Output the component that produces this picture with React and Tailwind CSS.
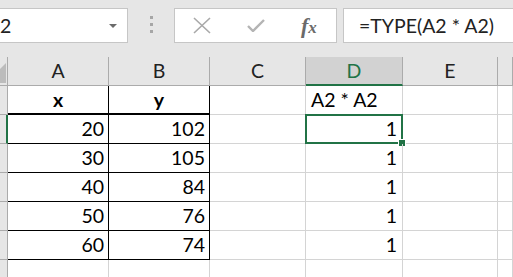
import React from "react";

const cols = ["A", "B", "C", "D", "E", ""];
const rows = [
  ["20", "102", "1"],
  ["30", "105", "1"],
  ["40", "84", "1"],
  ["50", "76", "1"],
  ["60", "74", "1"],
];

function Toolbar() {
  return (
    <div className="flex h-[57px] items-start bg-[#e6e6e6] pt-[8px]">
      <div className="-ml-px flex h-[35px] w-[129px] shrink-0 items-center border border-[#c6c6c6] bg-white">
        <span className="text-[19.5px] leading-none text-[#222]">2</span>
        <svg className="ml-auto mr-[10px]" width="8" height="4" viewBox="0 0 8 4">
          <path d="M0 0h8L4 4z" fill="#6b6b6b" />
        </svg>
      </div>
      <div className="flex w-[46px] shrink-0 flex-col items-center gap-[4px] pt-[8px]">
        <span className="h-[3px] w-[3px] bg-[#a6a6a6]" />
        <span className="h-[3px] w-[3px] bg-[#a6a6a6]" />
        <span className="h-[3px] w-[3px] bg-[#a6a6a6]" />
      </div>
      <div className="flex h-[35px] w-[163px] shrink-0 items-center border border-[#c6c6c6] bg-white">
        <svg className="ml-[18px]" width="18" height="17" viewBox="0 0 18 17">
          <path d="M1 1L17 16M17 1L1 16" stroke="#a9a9a9" strokeWidth="1.6" />
        </svg>
        <svg className="ml-[36px]" width="18" height="13" viewBox="0 0 18 13">
          <path d="M1 7L6 12L17 1" stroke="#b4b4b4" strokeWidth="2.4" fill="none" />
        </svg>
        <span className="ml-[36px] font-['Liberation_Serif',serif] text-[22px] font-bold italic leading-none text-[#6a6a6a]">
          f<span className="text-[17px]">x</span>
        </span>
      </div>
      <div className="ml-[6px] flex h-[35px] flex-1 items-center border border-r-0 border-[#c6c6c6] bg-white pl-[15px]">
        <span className="text-[19.5px] leading-none text-[#222]">=TYPE(A2 * A2)</span>
      </div>
    </div>
  );
}

function Cell({ children, className = "" }) {
  return (
    <div className={"flex h-[29px] items-center border-b border-r text-[19.5px] leading-none text-black " + className}>
      {children}
    </div>
  );
}

export default function App() {
  return (
    <div className="h-[277px] w-[513px] overflow-hidden bg-white font-['Lato',sans-serif]">
      <Toolbar />
      <div className="grid grid-cols-[8px_101px_101px_96px_97px_95px_1fr]">
        <div className="relative h-[29px] border-b border-r border-[#ababab] bg-[#e6e6e6]">
          <svg className="absolute right-[1px] top-[6px]" width="20" height="20" viewBox="0 0 20 20">
            <path d="M20 0V20H0z" fill="#bcbcbc" />
          </svg>
        </div>
        {cols.map((c) =>
          c === "D" ? (
            <div key={c} className="flex h-[29px] items-center justify-center border-b-2 border-r border-b-[#217346] border-r-[#ababab] bg-[#d2d2d2] text-[19.5px] text-[#217346]">
              {c}
            </div>
          ) : (
            <div key={c || "f"} className="flex h-[29px] items-center justify-center border-b border-r border-[#ababab] bg-[#e6e6e6] text-[19.5px] text-[#222]">
              {c}
            </div>
          )
        )}

        <div className="h-[29px] border-b border-r border-[#ababab] bg-[#e6e6e6]" />
        <Cell className="justify-center border-r-black border-b-2 border-b-black font-bold">x</Cell>
        <Cell className="justify-center border-r-black border-b-2 border-b-black font-bold">y</Cell>
        <Cell className="border-[#d4d4d4]" />
        <Cell className="border-[#d4d4d4] pl-[5px]">A2 * A2</Cell>
        <Cell className="border-[#d4d4d4]" />
        <Cell className="border-[#d4d4d4]" />

        {rows.map((r, i) => (
          <React.Fragment key={i}>
            <div
              className={
                "h-[29px] border-b bg-[#e6e6e6] " +
                (i === 0 ? "border-r-2 border-b-[#ababab] border-r-[#217346]" : "border-r border-[#ababab]")
              }
            />
            <Cell className="justify-end border-black pr-[4px]">{r[0]}</Cell>
            <Cell className="justify-end border-black pr-[4px]">{r[1]}</Cell>
            <Cell className="border-[#d4d4d4]" />
            <Cell className="relative justify-end border-[#d4d4d4] pr-[5px]">
              {r[2]}
              {i === 0 ? (
                <>
                  <div className="absolute -left-px -top-px bottom-[-1px] right-[-1px] border-2 border-[#217346]" />
                  <div className="absolute bottom-[-4px] right-[-4px] h-[8px] w-[8px] border border-white bg-[#217346]" />
                </>
              ) : null}
            </Cell>
            <Cell className="border-[#d4d4d4]" />
            <Cell className="border-[#d4d4d4]" />
          </React.Fragment>
        ))}

        <div className="h-[29px] border-b border-r border-[#ababab] bg-[#e6e6e6]" />
        <Cell className="border-[#d4d4d4]" />
        <Cell className="border-[#d4d4d4]" />
        <Cell className="border-[#d4d4d4]" />
        <Cell className="border-[#d4d4d4]" />
        <Cell className="border-[#d4d4d4]" />
        <Cell className="border-[#d4d4d4]" />
      </div>
    </div>
  );
}
